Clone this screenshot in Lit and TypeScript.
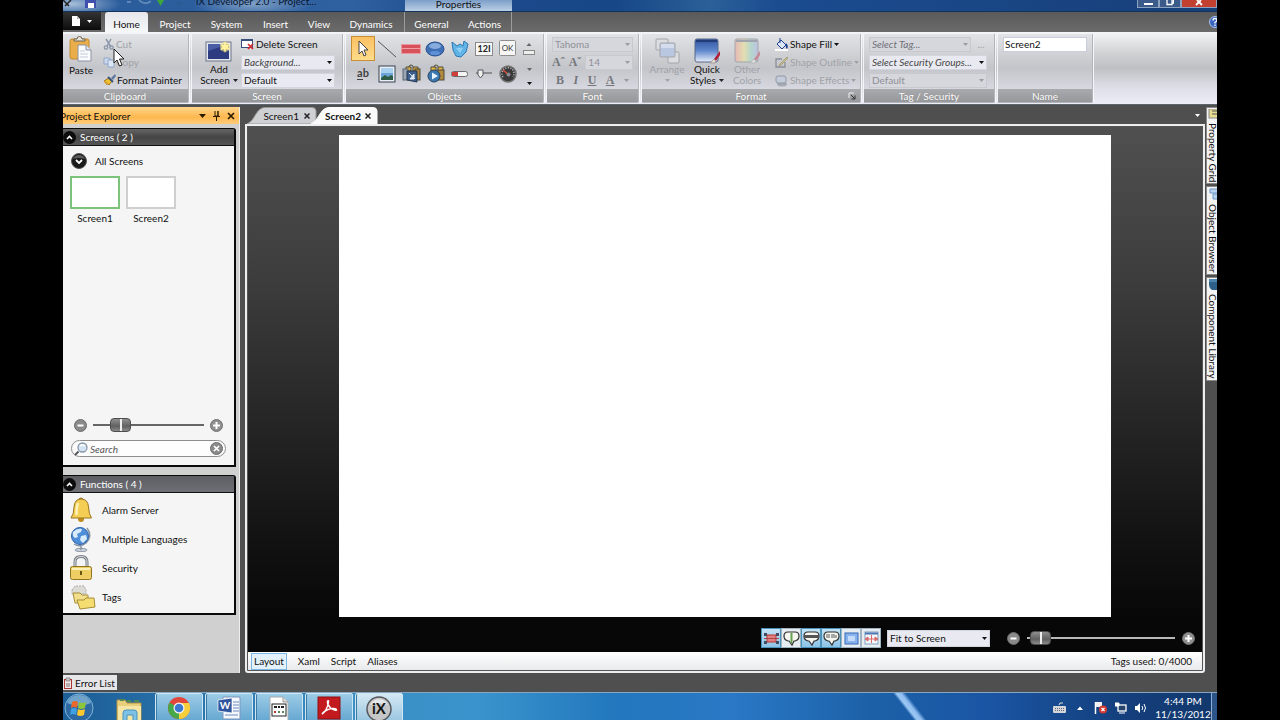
import { LitElement, html, css, svg, nothing, TemplateResult } from "lit";
import { customElement, property } from "lit/decorators.js";
import { classMap } from "lit/directives/class-map.js";

const icon = (w: number, h: number, body: unknown, box = `0 0 ${w} ${h}`) =>
  html`<svg width=${w} height=${h} viewBox=${box} aria-hidden="true">${body}</svg>`;

const caret = (color = "#111") => icon(5, 3, svg`<path d="M0 0h5L2.5 3z" fill=${color}/>`);

const base = css`
  * { box-sizing: border-box; }
  :host { font-family: Lato, Roboto, "Noto Sans", sans-serif; font-size: 10px; line-height: 12px; color: #111; }
  button, input, select { font: inherit; color: inherit; margin: 0; padding: 0; border: 0; background: none; border-radius: 0; outline: 0; }
  button { display: flex; align-items: center; justify-content: center; white-space: nowrap; }
  select { appearance: none; }
  svg { display: block; flex: none; }
`;

const art = {
  paste: icon(24, 26, svg`
    <rect x="1" y="3" width="19" height="20" rx="2" fill="#e9ae4a" stroke="#c48a2c"/>
    <path d="M5 5V3h3q0-2.500 2.500-2.500T13 3h3v2z" fill="#e8e4da" stroke="#6d6250"/>
    <path d="M9 9h8l5 5v11H9z" fill="#fafbfd" stroke="#8a93a6"/>
    <path d="M17 9v5h5" fill="#dfe4ee" stroke="#8a93a6"/>
    <path d="M11 15h5M11 18h8M11 21h8" stroke="#c5cbd8"/>`),
  cut: icon(12, 12, svg`<path d="M3 1l5 8M8 1L4 8" stroke="#8b97aa" stroke-width="1.500"/><circle cx="3" cy="9.500" r="1.700" fill="none" stroke="#8b97aa" stroke-width="1.300"/><circle cx="8.500" cy="9.500" r="1.700" fill="none" stroke="#8b97aa" stroke-width="1.300"/>`),
  copy: icon(12, 12, svg`<path d="M1 2h5l1 1v5H1z" fill="#cddaee" stroke="#8fa6c8"/><path d="M5 4h5l1 1v6H5z" fill="#dce6f4" stroke="#8fa6c8"/>`),
  painter: icon(13, 12, svg`<path d="M1 7l5-3 3 3-3 4z" fill="#f2c230" stroke="#a5791a"/><path d="M5 3l5 5" stroke="#3c5478" stroke-width="2"/><path d="M8 4l4-4 1 2-3 4z" fill="#5f7b9f"/><path d="M1 7l3 4" stroke="#d99a12"/>`),
  addScreen: icon(28, 24, svg`
    <rect x="1" y="3" width="25" height="19" fill="#e4e7ee" stroke="#6c748a"/>
    <rect x="3" y="5" width="21" height="15" fill="#4a5da4"/><path d="M3 20V12L24 5v15z" fill="#2d3c80"/>
    <circle cx="20" cy="8" r="5" fill="#fbe77a" opacity=".6"/>
    <path d="M20 2l1.200 3.800L25 5l-2 3 2 3-3.800-.8L20 14l-1.200-3.800L15 11l2-3-2-3 3.800.8z" fill="#fff3a0"/>`),
  deleteScreen: icon(13, 12, svg`<rect x=".5" y="1.500" width="11" height="8" fill="#fff" stroke="#39507c"/><path d="M0 1h12v2H0z" fill="#39507c"/><path d="M7 6l5 5M12 6l-5 5" stroke="#d3252b" stroke-width="1.700"/>`),
  pointer: icon(12, 18, svg`<path d="M2 1v13l3-3 2 5 2-1-2-5h4z" fill="#fff" stroke="#444" stroke-width="1"/>`),
  line: icon(20, 18, svg`<path d="M1 1l18 16" stroke="#555"/>`),
  rect: icon(20, 12, svg`<rect x=".5" y="1.500" width="19" height="9" fill="#d8525c" stroke="#e99aa0"/><path d="M1 5.500h18" stroke="#eea0a5" stroke-width="1"/>`),
  ellipse: icon(20, 16, svg`<ellipse cx="10" cy="8" rx="9" ry="7" fill="#3f6fb4" stroke="#264f8e"/><ellipse cx="10" cy="5" rx="6" ry="3" fill="#86abdc"/><ellipse cx="10" cy="12" rx="5" ry="2" fill="#5d92d6"/>`),
  poly: icon(18, 18, svg`<path d="M1 2l5 4 3-2 3 2 1-5 4 3-2 8-5 5-5-1-3-6z" fill="#62b4e6" stroke="#2c78b4"/><path d="M5 8h7l-3 5z" fill="#8fd0f4"/>`),
  num: icon(18, 14, svg`<rect x=".5" y=".5" width="17" height="13" fill="#f7f7f7" stroke="#8a8a8a"/><text x="9" y="10" text-anchor="middle" font-size="9" font-weight="700" fill="#222">12I</text>`),
  ok: icon(18, 17, svg`<rect x=".5" y=".5" width="16" height="15" rx="1" fill="#f6f6f6" stroke="#8e8e8e"/><text x="8.500" y="11" text-anchor="middle" font-size="8" fill="#333">OK</text>`),
  ab: icon(16, 14, svg`<text x="8" y="10" text-anchor="middle" font-size="11" font-weight="700" fill="#444">ab</text><path d="M2 12.500h6" stroke="#444"/>`),
  picture: icon(18, 18, svg`<rect x="1" y="1" width="16" height="16" fill="#e8eef4" stroke="#39434f"/><rect x="3" y="3" width="12" height="12" fill="#6ba5d8"/><path d="M3 3h12v5H3z" fill="#a9d0ee"/><path d="M3 13l4-3 3 2 3-2 2 1v4H3z" fill="#2f5c47"/>`),
  clips: icon(19, 19, svg`<path d="M4 3h5v4H4zM11 3h5v4h-5z" fill="#e8b53e" stroke="#4a4a3a"/><path d="M7 3q0-2 2-2t2 2" fill="none" stroke="#4a4a3a"/><rect x="1" y="5" width="5" height="11" fill="#9aa5b5" stroke="#5b6675"/><rect x="13" y="5" width="5" height="11" fill="#b5893d" stroke="#4a4a3a"/><path d="M5 7h10v11l-10-2z" fill="#3c5f8f" stroke="#26384f"/><path d="M7 9l6 6M12 10v5H8z" fill="#dfe9f5" stroke="#dfe9f5"/>`),
  media: icon(19, 19, svg`<path d="M5 3h5v4H5zM12 3h5v4h-5z" fill="#e8b53e" stroke="#4a4a3a"/><path d="M8 3q0-2 2-2t2 2" fill="none" stroke="#4a4a3a"/><rect x="12" y="6" width="6" height="10" fill="#b5893d" stroke="#4a4a3a"/><circle cx="8" cy="12" r="6" fill="#3b78b0" stroke="#28435e"/><path d="M6 8.500l6 3.500-6 3.500z" fill="#e9f3fb"/>`),
  meter: icon(17, 8, svg`<rect x=".5" y="1.500" width="16" height="5" rx="2" fill="#f4f4f4" stroke="#6a6a6a"/><path d="M1 2h6v4H1z" fill="#cf3c3c"/>`),
  slider: icon(17, 10, svg`<path d="M1 4h16" stroke="#777" stroke-width="1.500"/><path d="M3 1h5v5L5.500 9 3 6z" fill="#eef3ea" stroke="#556"/>`),
  gauge: icon(18, 18, svg`<circle cx="9" cy="9" r="8" fill="#3a3a3c" stroke="#777" stroke-width="1.500"/><path d="M4 12a6 6 0 1 1 10 0" fill="none" stroke="#c9c9c9" stroke-dasharray="1 1.500" stroke-width="1.500"/><path d="M4 5l6 5" stroke="#e24e3c" stroke-width="1.500"/><circle cx="9.500" cy="9.500" r="2" fill="#8a8a8a"/>`),
  arrange: icon(27, 26, svg`<g stroke="#a3a5aa" fill="#dcdde0"><rect x="2" y="1" width="12" height="11" rx="1"/><rect x="14" y="14" width="11" height="11" rx="1"/><rect x="6" y="5" width="15" height="14" rx="1" fill="#b9c7e0"/></g><path d="M7 6h13v4H7z" fill="#d5dced"/>`),
  quick: icon(27, 26, svg`<defs><linearGradient id="q" x2="0" y2="1"><stop offset="0" stop-color="#2f539e"/><stop offset=".5" stop-color="#5d86cc"/><stop offset="1" stop-color="#e8effa"/></linearGradient></defs><rect x="1" y="1" width="23" height="23" rx="2" fill="url(#q)" stroke="#5a6887"/><path d="M2 3h21" stroke="#223c78" stroke-width="2"/><path d="M26 13l-6 8 2 2 4-6z" fill="#b01f37"/><path d="M20 21l-4 4h5l1-2z" fill="#e6d9d2" stroke="#8d7d75" stroke-width=".6"/>`),
  others: icon(27, 26, svg`<defs><linearGradient id="o"><stop offset="0" stop-color="#e6b9b4"/><stop offset=".4" stop-color="#e3ddb2"/><stop offset=".7" stop-color="#b4d6cd"/><stop offset="1" stop-color="#bfc3e2"/></linearGradient></defs><rect x="1" y="1" width="23" height="23" rx="2" fill="url(#o)" stroke="#a2a5ab"/><path d="M2 3h21" stroke="#a0a4ae" stroke-width="2"/><path d="M26 13l-6 8 2 2 4-6z" fill="#c48b95"/><path d="M20 21l-4 4h5l1-2z" fill="#ddd" stroke="#aaa" stroke-width=".6"/>`),
  fill: icon(13, 13, svg`<path d="M2 6l4-4 5 5-4 4z" fill="#dce8fa" stroke="#1d3f8e"/><path d="M5 0v5" stroke="#1d3f8e"/><path d="M11 5q3 3 1 6-2-2-1-6z" fill="#1d3f8e"/><path d="M0 12h13" stroke="#fff" stroke-width="2"/>`),
  outline: icon(13, 13, svg`<path d="M10 6v5H1V3h6" fill="none" stroke="#8a8f98" stroke-width="1.300"/><path d="M12 1L5 8l-1 2 2-1 7-7z" fill="#d0c384" stroke="#8c8763" stroke-width=".6"/>`),
  effects: icon(13, 13, svg`<ellipse cx="7" cy="10" rx="5" ry="2.500" fill="#a4a9b2"/><rect x="1" y="2" width="10" height="7" rx="2" fill="#c4ccda" stroke="#8f98a8"/>`),
  minus: icon(13, 13, svg`<circle cx="6.500" cy="6.500" r="6" fill="#8a8a8a" stroke="#6c6c6c"/><path d="M3.500 6.500h6" stroke="#fff" stroke-width="2"/>`),
  plus: icon(13, 13, svg`<circle cx="6.500" cy="6.500" r="6" fill="#8f8f8f" stroke="#707070"/><path d="M3 6.500h7M6.500 3v7" stroke="#fff" stroke-width="2"/>`),
  clear: icon(13, 13, svg`<circle cx="6.500" cy="6.500" r="6" fill="#8a8a8a" stroke="#6e6e6e"/><path d="M4 4l5 5M9 4L4 9" stroke="#fff" stroke-width="1.700"/>`),
  glass: icon(14, 14, svg`<path d="M4.500 9.500L1 13" stroke="#555" stroke-width="2"/><circle cx="8.500" cy="5.500" r="4.500" fill="#d3e4f2" stroke="#8797a8" stroke-width="1.300"/><path d="M6 4q2-2 5 0" stroke="#fff" fill="none" stroke-width="1.500"/>`),
  up: icon(13, 13, svg`<circle cx="6.500" cy="6.500" r="6.500" fill="#0c0c0c"/><path d="M4 8l2.500-2.500L9 8" fill="none" stroke="#fff" stroke-width="1.600"/>`),
  down: icon(16, 16, svg`<circle cx="8" cy="8" r="7.500" fill="#1a1a1a" stroke="#555"/><path d="M2 6a6.500 6.500 0 0 1 12 0q-6-2-12 0z" fill="#5a5a5a"/><path d="M5 7l3 3 3-3" fill="none" stroke="#fff" stroke-width="1.800"/>`),
  bell: icon(24, 26, svg`<circle cx="11" cy="22" r="3" fill="#c08b1c"/><circle cx="11" cy="3" r="2" fill="#f5d873" stroke="#8d6a1b"/><path d="M11 2q7 0 7.500 8 .3 7 3 11H1q3-4 3-11Q4.500 2 11 2z" fill="#f4cd55" stroke="#9a751f"/><path d="M8 6Q6.500 9 6.500 18" stroke="#fff2b8" stroke-width="2.500" fill="none"/>`),
  globe: icon(24, 26, svg`<ellipse cx="11" cy="24" rx="6" ry="1.700" fill="#c9d0d8" stroke="#8b96a5"/><path d="M11 20v4M17 2q6 8-1 15-6 5-12 1" fill="none" stroke="#8b96a5" stroke-width="1.500"/><circle cx="10" cy="10" r="8.500" fill="#4f8ed8" stroke="#2c62ab"/><path d="M3 6q4-4 9-3l-1 3-4 2 1 3-3 1q-3-2-2-6zM11 10l5-1 1 4-4 4-3-3z" fill="#d8ebfb"/>`),
  lock: icon(24, 26, svg`<path d="M5 12V7q0-5.500 6-5.500T17 7v5" fill="none" stroke="#7b8187" stroke-width="3"/><path d="M5 12V7q0-5.500 6-5.500T17 7v5" fill="none" stroke="#d7dbdf"/><rect x=".5" y="11.500" width="21" height="13" rx="2" fill="#efcf63" stroke="#8f7421"/><path d="M2 14h18" stroke="#fbf0b5" stroke-width="2"/><path d="M11 16v4" stroke="#6a5515" stroke-width="2"/>`),
  tags: icon(26, 26, svg`<path d="M2 6l3-4h9l2 4v4H2z" fill="#dcdcd4" stroke="#aaa" stroke-dasharray="2 1"/><path d="M3 9h7l2 2h6v8H5z" fill="#f2df8c" stroke="#a88d35"/><path d="M7 16h7l2-2h8l1 9-15 2z" fill="#f6dd72" stroke="#a88d35"/>`),
  error: icon(9, 12, svg`<rect x=".5" y="2.500" width="7" height="9" fill="#f5e6e6" stroke="#a33"/><path d="M2 1h4v3H2z" fill="#c8c8c8" stroke="#666" stroke-width=".6"/><path d="M3 6v4M5 6v4" stroke="#777"/>`),
};

@customElement("ix-combo")
class IxCombo extends LitElement {
  @property() label = "";
  @property() value = "";
  @property({ type: Boolean, reflect: true }) disabled = false;
  @property({ type: Boolean, reflect: true }) hint = false;
  static styles = [base, css`
    :host { display: grid; align-items: center; height: 15px; background: #e9eaf1; border: 1px solid #d3d5de; min-width: 0; }
    select { grid-area: 1 / 1; width: 100%; height: 100%; padding-left: 2px; line-height: 12px; opacity: 1; }
    svg { grid-area: 1 / 1; justify-self: end; margin-right: 2px; pointer-events: none; }
    :host([hint]) select { font-style: italic; color: #444; }
    :host([disabled]) { background: #d6d7dc; border-color: #c8c9cf; }
    :host([disabled]) select { color: #8e9098; }
    :host([disabled][hint]) select { color: #6e7078; }
  `];
  render() {
    return html`<select aria-label=${this.label} ?disabled=${this.disabled}><option>${this.value}</option></select>${caret(this.disabled ? "#9a9ca3" : "#111")}`;
  }
}

@customElement("ix-group")
class IxGroup extends LitElement {
  @property() name = "";
  @property({ type: Boolean }) launcher = false;
  static styles = [base, css`
    :host { display: grid; grid-template-rows: 1fr 13px; height: 70px; border: 1px solid #b3b5ba; border-left-color: #f3f4f7; border-top-color: #f3f4f7;
      background: linear-gradient(#e2e3e6, #cbccd0 38%, #c4c5ca 50%, #dadbe3 85%); border-radius: 2px; box-shadow: 1px 0 #f5f6fa; }
    .body { display: flex; padding: 1px 5px 0; min-width: 0; }
    .name { display: flex; align-items: center; justify-content: center; color: #fff; background: linear-gradient(#a9aaad, #97989b); text-shadow: 0 0 1px #777; }
    .launch { position: absolute; right: 4px; }
    .foot { display: grid; position: relative; align-items: center; }
    .foot .name { height: 13px; }
  `];
  render() {
    return html`<div class="body"><slot></slot></div>
      <div class="foot"><div class="name">${this.name}</div>
      ${this.launcher ? html`<button class="launch" aria-label="More ${this.name}">${icon(8, 8, svg`<path d="M1 6V1h5" fill="none" stroke="#eee"/><path d="M3 3l4 4M7 3.500V7H3.500" fill="none" stroke="#333"/>`)}</button>` : nothing}</div>`;
  }
}

@customElement("ix-ribbon")
class IxRibbon extends LitElement {
  static styles = [base, css`
    :host { display: flex; gap: 2px; height: 73px; padding: 1px 0 2px; border-bottom: 1px solid #5c6470; background: linear-gradient(#f4f5f6, #d0d1d3 30%, #bfc0c3 50%, #d9dae2 72%, #eceef8); }
    .clip { width: 128px; margin-left: -2px; }
    .screen { width: 152px; } .objects { width: 199px; } .font { width: 93px; }
    .format { width: 220px; } .tag { width: 132px; } .nm { width: 96px; }
    .big { flex-direction: column; justify-content: flex-start; gap: 0; line-height: 11px; padding-top: 2px; width: 39px; }
    .format .big { width: 40px; }
    .big .pic { display: flex; align-items: center; height: 27px; }
    .paste .pic { height: 29px; align-items: flex-start; }
    .big .cap { display: flex; align-items: center; gap: 3px; min-height: 11px; }
    .paste { width: 28px; padding-top: 1px; }
    .add { width: 44px; }
    .list { display: grid; grid-auto-rows: 18px; align-items: center; flex: 1; min-width: 0; }
    .list.left { padding-left: 8px; }
    .list.trim { padding-right: 2px; }
    .row { justify-content: flex-start; gap: 2px; }
    .clip .row { gap: 1px; }
    .off { color: #a0a2a8; }
    .tools { flex: 1; display: grid; grid-template-columns: repeat(7, 1fr); grid-auto-rows: 25px; padding-top: 1px; }
    .tool.on { background: linear-gradient(#fbc063, #ffdc8a); border: 1px solid #c98f36; }
    .scroll { width: 18px; display: flex; flex-direction: column; align-items: center; justify-content: space-between; padding: 8px 0 4px; }
    .line { display: flex; align-items: center; gap: 4px; }
    .line ix-combo { flex: 1; }
    .pad { justify-content: space-between; padding: 0 4px; }
    .serif { font-family: "Liberation Serif", serif; font-size: 12px; font-weight: 700; color: #74767c; }
    .it { font-style: italic; } .un { text-decoration: underline; }
    .dots { width: 12px; }
    .name-in { width: 100%; height: 15px; background: #fff; border: 1px solid #c9ccda; padding-left: 1px; }
  `];

  big(pic: TemplateResult, lines: string[], cls: string, drop = false) {
    return html`<button class="big ${cls}"><span class="pic">${pic}</span>${lines.map((t, i) => html`<span class="cap">${t}${drop && i === lines.length - 1 ? caret(cls === "off" ? "#a0a2a8" : "#222") : nothing}</span>`)}</button>`;
  }

  render() {
    const a = art;
    const tools: [string, TemplateResult][] = [
      ["Select", a.pointer], ["Line", a.line], ["Rectangle", a.rect], ["Ellipse", a.ellipse], ["Polyline", a.poly], ["Analog Numeric", a.num], ["Button", a.ok],
      ["Text", a.ab], ["Picture", a.picture], ["Multi Picture", a.clips], ["Media Player", a.media], ["Linear Meter", a.meter], ["Slider", a.slider], ["Circular Meter", a.gauge],
    ];
    return html`
      <ix-group class="clip" name="Clipboard">
        ${this.big(a.paste, ["Paste"], "paste")}
        <div class="list left">
          <button class="row off">${a.cut}Cut</button>
          <button class="row off">${a.copy}Copy</button>
          <button class="row">${a.painter}Format Painter</button>
        </div>
      </ix-group>
      <ix-group class="screen" name="Screen">
        ${this.big(a.addScreen, ["Add", "Screen"], "add", true)}
        <div class="list trim">
          <button class="row">${a.deleteScreen}Delete Screen</button>
          <ix-combo hint label="Background screen" value="Background..."></ix-combo>
          <ix-combo label="Screen style" value="Default"></ix-combo>
        </div>
      </ix-group>
      <ix-group class="objects" name="Objects">
        <div class="tools">${tools.map(([n, pic], i) => html`<button class=${classMap({ tool: true, on: i === 0 })} aria-label=${n}>${pic}</button>`)}</div>
        <div class="scroll">
          ${icon(12, 13, svg`<path d="M3.500 3L6 0l2.500 3z" fill="#666"/><rect x=".5" y="7.500" width="11" height="4" fill="#eee" stroke="#888"/>`)}
          ${caret("#666")}${caret()}
        </div>
      </ix-group>
      <ix-group class="font" name="Font">
        <div class="list">
          <ix-combo disabled label="Font family" value="Tahoma"></ix-combo>
          <div class="line"><button class="serif">A&#710;</button><button class="serif">A&#711;</button><ix-combo disabled label="Font size" value="14"></ix-combo></div>
          <div class="line pad"><button class="serif">B</button><button class="serif it">I</button><button class="serif un">U</button><button class="serif un">A</button>${caret("#999")}</div>
        </div>
      </ix-group>
      <ix-group class="format" name="Format" launcher>
        ${this.big(a.arrange, ["Arrange", ""], "off", true)}
        ${this.big(a.quick, ["Quick", "Styles"], "on", true)}
        ${this.big(a.others, ["Other", "Colors"], "off")}
        <div class="list left">
          <button class="row">${a.fill}Shape Fill ${caret()}</button>
          <button class="row off">${a.outline}Shape Outline ${caret("#a0a2a8")}</button>
          <button class="row off">${a.effects}Shape Effects ${caret("#a0a2a8")}</button>
        </div>
      </ix-group>
      <ix-group class="tag" name="Tag / Security">
        <div class="list trim">
          <div class="line"><ix-combo disabled hint label="Tag" value="Select Tag..."></ix-combo><button class="dots off">...</button></div>
          <ix-combo hint label="Security groups" value="Select Security Groups..."></ix-combo>
          <ix-combo disabled label="Visibility" value="Default"></ix-combo>
        </div>
      </ix-group>
      <ix-group class="nm" name="Name">
        <div class="list"><input class="name-in" aria-label="Name" .value=${"Screen2"}></div>
      </ix-group>`;
  }
}

const zoomStyles = css`
  .zoom { display: flex; align-items: center; gap: 7px; }
  .zoom input { appearance: none; flex: 1; min-width: 0; height: 16px; background: linear-gradient(var(--track), var(--track)) center / 100% 2px no-repeat; }
  .zoom input::-webkit-slider-thumb { appearance: none; width: 21px; height: 14px; border: 1px solid #4d4d4d; border-radius: 4px;
    background: linear-gradient(90deg, transparent 9px, #eee 9px, #eee 11px, transparent 11px), linear-gradient(#8f8f8f, #606060 60%, #8b8b8b); }
`;

@customElement("ix-explorer")
class IxExplorer extends LitElement {
  static styles = [base, zoomStyles, css`
    :host { display: flex; flex-direction: column; background: #d0d0d0; border-right: 1px solid #eee; overflow: hidden; }
    .title { display: flex; align-items: center; gap: 7px; height: 17px; padding-right: 4px; background: linear-gradient(#ffd58c, #fdb74e 60%, #ffcd7c); }
    .title h2 { flex: 1; margin: 0 0 0 -3px; font-size: 10px; font-weight: 400; }
    .panel { display: flex; flex-direction: column; margin: 4px 3px 4px 0; border: solid #0a0a0a; border-width: 1px 2px 2px 0; background: #f5f5f5; border-radius: 0 3px 0 0; }
    .screens { height: 339px; }
    .head { height: 17px; justify-content: flex-start; gap: 4px; color: #fff; background: linear-gradient(#666, #444 50%, #565656); border-bottom: 1px solid #111; width: 100%; }
    .head.dim { background: linear-gradient(#5c5c62, #6f6f76); }
    .all { justify-content: flex-start; gap: 8px; padding: 7px 0 7px 8px; }
    .thumbs { display: flex; gap: 6px; padding-left: 7px; flex: 1; align-items: flex-start; }
    .thumb { flex-direction: column; gap: 3px; width: 50px; }
    .thumb i { width: 50px; height: 33px; background: #fff; border: 2px solid #cfcfcf; }
    .thumb.on i { border-color: #7cc47c; }
    .zoom { --track: #666; padding: 0 11px; height: 18px; gap: 6px; }
    .search { display: flex; align-items: center; gap: 2px; height: 17px; margin: 6px 8px 8px 8px; border: 1px solid #8d8d8d; border-radius: 9px; background: #fdfdfd; padding: 0 2px; }
    .search input { flex: 1; min-width: 0; font-style: italic; }
    .search input::placeholder { color: #555; opacity: 1; }
    .items { display: grid; grid-auto-rows: 29px; padding: 2px 0 2px 7px; }
    .item { justify-content: flex-start; gap: 8px; }
    .item span { width: 24px; }
  `];
  render() {
    const items: [TemplateResult, string][] = [[art.bell, "Alarm Server"], [art.globe, "Multiple Languages"], [art.lock, "Security"], [art.tags, "Tags"]];
    return html`
      <div class="title"><h2>Project Explorer</h2>
        <button aria-label="Window position">${icon(7, 4, svg`<path d="M0 0h7L3.500 4z" fill="#2b1c00"/>`)}</button>
        <button aria-label="Auto hide">${icon(7, 10, svg`<path d="M2 0v5h3V0M0 5.500h7M3.500 5v5M5 0v5" fill="none" stroke="#2b1c00"/>`)}</button>
        <button aria-label="Close">${icon(8, 8, svg`<path d="M1 1l6 6M7 1L1 7" stroke="#2b1c00" stroke-width="1.700"/>`)}</button>
      </div>
      <section class="panel screens">
        <button class="head">${art.up}Screens ( 2 )</button>
        <button class="all">${art.down}All Screens</button>
        <div class="thumbs">
          <button class="thumb on"><i></i>Screen1</button>
          <button class="thumb"><i></i>Screen2</button>
        </div>
        <div class="zoom"><button aria-label="Smaller">${art.minus}</button><input type="range" aria-label="Thumbnail size" .value=${"19"}><button aria-label="Larger">${art.plus}</button></div>
        <label class="search">${art.glass}<input placeholder="Search" aria-label="Search"><button aria-label="Clear">${art.clear}</button></label>
      </section>
      <section class="panel">
        <button class="head dim">${art.up}Functions ( 4 )</button>
        <div class="items">${items.map(([p, t]) => html`<button class="item"><span>${p}</span>${t}</button>`)}</div>
      </section>`;
  }
}

@customElement("ix-editor")
class IxEditor extends LitElement {
  static styles = [base, zoomStyles, css`
    :host { display: flex; flex-direction: column; min-width: 0; }
    .tabs { display: flex; align-items: stretch; height: 17px; padding: 0 5px 0 2px; }
    .doc { display: grid; width: 70px; margin-right: -6px; }
    .doc svg, .doc span { grid-area: 1 / 1; }
    .doc span { display: flex; align-items: center; justify-content: flex-end; gap: 5px; padding-right: 7px; }
    .doc.on { width: 67px; font-weight: 700; z-index: 1; }
    .doc.on span { gap: 4px; }
    .more { margin-left: auto; }
    .frame { flex: 1; display: flex; flex-direction: column; border: 2px solid #eceef0; border-radius: 0 0 3px 3px; box-shadow: inset 0 0 0 1px #555; padding: 1px; min-height: 0; }
    .canvas { flex: 1; display: flex; flex-direction: column; min-height: 0; padding-top: 8px; background: linear-gradient(#505050, #3c3c3c 30%, #111 80%, #070707 94%); }
    .stage { flex: 1; min-height: 0; display: flex; justify-content: center; }
    .page { height: 100%; aspect-ratio: 8 / 5; background: #fff; }
    .bar { display: flex; align-items: center; justify-content: flex-end; height: 35px; padding: 7px 7px 0 0; flex: none; }
    .opts { display: flex; margin-right: 6px; }
    .opt { width: 20px; height: 20px; background: #e6ecf0; border: 1px solid #9fb4c0; }
    .opt.on { background: linear-gradient(#c3e2f5, #8cc3e6); border-color: #4b93bb; }
    .bar ix-combo { width: 103px; height: 17px; margin-right: 17px; }
    .zoom { --track: #b8b8b8; width: 188px; }
    .views { display: flex; align-items: center; height: 18px; flex: none; padding: 0 10px 0 3px; gap: 11px; background: linear-gradient(#fff, #e9eaec); }
    .view.on { background: #e2f1fc; border: 1px solid #7db7e4; height: 17px; padding: 0 2px; }
    .used { margin-left: auto; }
  `];
  render() {
    const shape = (on: boolean, w: number) => icon(w, 17, svg`<path d=${`M0 17Q5 15 9 7 13 0 19 .5H${w - 5}Q${w - 1} .5 ${w - 1} 4V17z`} fill=${on ? "#fafafa" : "#cfd0d3"} stroke=${on ? "#fff" : "#9a9a9a"}/>`);
    const x = icon(6, 6, svg`<path d="M.5 .5l5 5M5.500 .5l-5 5" stroke="#222" stroke-width="1.500"/>`);
    const balloon = (inner: unknown) => icon(17, 17, svg`<path d="M5 2h7q4 0 4 4t-4 5h-1l-2 4-3-4H5Q1 10 1 6t4-4z" fill="#f6f6f0" stroke="#333" stroke-width="1.200"/>${inner}`);
    const opts: [string, boolean, TemplateResult][] = [
      ["Snap", true, icon(17, 17, svg`<rect x="4" y="5" width="9" height="7" fill="#e08080" stroke="#b33"/><path d="M1 3h3v3H1zM13 3h3v3h-3zM1 11h3v3H1zM13 11h3v3h-3z" fill="#444a60"/><path d="M1 8.500h15" stroke="#a44"/>`)],
      ["Tags", false, balloon(svg`<path d="M8.500 3v10" stroke="#62a24e" stroke-width="2"/>`)],
      ["Actions", true, balloon(svg`<path d="M1 5h15v3H1z" fill="#555"/>`)],
      ["Names", true, balloon(svg`<path d="M4 4v4M6 4v4M9 4v4M11 4v4M13 5v3" stroke="#333" stroke-width=".8"/>`)],
      ["Area", false, icon(17, 17, svg`<rect x="2" y="3" width="13" height="11" fill="#86b2ee" stroke="#3568b8"/><rect x="5" y="6" width="7" height="5" fill="#c4dbfa"/>`)],
      ["Center", false, icon(17, 17, svg`<rect x="2" y="2" width="13" height="12" fill="#f4f8fc" stroke="#7d9cc0"/><path d="M2 3.500h13" stroke="#4c78b4" stroke-width="2"/><path d="M8.500 5v8M4 9h9M2 9l3-2v4zM15 9l-3-2v4z" stroke="#d86a6a" fill="#d86a6a"/>`)],
    ];
    return html`
      <div class="tabs">
        <button class="doc">${shape(false, 70)}<span>Screen1 ${x}</span></button>
        <button class="doc on">${shape(true, 67)}<span>Screen2 ${x}</span></button>
        <button class="more" aria-label="Open documents">${caret("#fff")}</button>
      </div>
      <div class="frame">
        <div class="canvas">
          <div class="stage"><div class="page"></div></div>
          <div class="bar">
            <div class="opts">${opts.map(([n, on, p]) => html`<button class=${classMap({ opt: true, on })} aria-label=${n}>${p}</button>`)}</div>
            <ix-combo label="Zoom" value="Fit to Screen"></ix-combo>
            <div class="zoom"><button aria-label="Zoom out">${art.minus}</button><input type="range" aria-label="Zoom level" .value=${"2"}><button aria-label="Zoom in">${art.plus}</button></div>
          </div>
        </div>
        <div class="views">
          <button class="view on">Layout</button><button class="view">Xaml</button><button class="view">Script</button><button class="view">Aliases</button>
          <span class="used">Tags used: 0/4000</span>
        </div>
      </div>`;
  }
}

@customElement("ix-taskbar")
class IxTaskbar extends LitElement {
  static styles = [base, css`
    :host { display: flex; height: 28px; overflow: hidden; color: #fff; border-top: 1px solid #86a6c2;
      background: linear-gradient(52deg, transparent 72.400%, #9cc8f4 72.700%, #8dbcf0 73.100%, transparent 73.500%) , linear-gradient(90deg, #1c5d96, #3a8fc4 25%, #3a93cc 36%, #2277bd 48%, #2a78c6 58%, #1c61a8 70%, #1a55a4 80%, #143f7c 92%, #12386c); }
    .start { width: 32px; align-items: flex-start; }
    .app { width: 48px; margin-right: 2px; align-items: flex-start; padding-top: 3px; height: 32px; }
    .pin { margin-left: 10px; }
    .open { border: 1px solid #cfe6f5; border-radius: 2px; background: linear-gradient(#9ccbe6, #5fa3cf); box-shadow: inset 1px 0 #3b7ba6; padding-top: 2px; }
    .open.on { background: linear-gradient(#d4e9f4, #93c2de); }
    .tray { margin-left: auto; display: flex; align-items: center; gap: 8px; padding-top: 2px; }
    .clock { text-align: center; line-height: 13px; width: 56px; }
    .desk { width: 6px; border-left: 1px solid #8fb0d4; background: #2c5488; height: 28px; }
  `];
  render() {
    const apps: [string, TemplateResult, string][] = [
      ["Explorer", icon(28, 26, svg`<path d="M2 4h8l2 3h14v18H2z" fill="#e9cf7c" stroke="#b39343"/><path d="M3 10h23v15H3z" fill="#f6e6a6"/><path d="M5 4h4M12 5h4M19 5h5" stroke="#4c8a50" stroke-width="2"/><path d="M8 26V17q0-3 3-3h8q3 0 3 3v9h-4v-7h-6v7z" fill="#7dc1e6" stroke="#4a92bd"/>`), "pin"],
      ["Chrome", icon(24, 24, svg`<circle cx="12" cy="12" r="11" fill="#e2463a"/><path d="M12 12L2.500 6.500A11 11 0 0 0 12 23l5-8.500z" fill="#45a849"/><path d="M12 12l0-5h10A11 11 0 0 1 12 23z" fill="#f6cf3b"/><circle cx="12" cy="12" r="5.500" fill="#f4f4f4"/><circle cx="12" cy="12" r="4.300" fill="#3c78d0"/>`), "open"],
      ["Word", icon(24, 24, svg`<path d="M6 1h17v22H6z" fill="#f4f7fc" stroke="#7d95bd"/><path d="M16 6h6M16 9h6M16 12h6M16 15h6M8 19h13" stroke="#6f8cc0"/><path d="M1 4l14-2v15L1 15z" fill="#2f559e" stroke="#fff" stroke-width=".7"/><text x="8" y="13" text-anchor="middle" font-size="10" font-weight="700" fill="#fff">W</text>`), "open"],
      ["Document", icon(22, 25, svg`<path d="M2 1h13l5 5v20H2z" fill="#fff" stroke="#aaa"/><path d="M15 1v5h5" fill="#ddd" stroke="#999"/><rect x="4" y="8" width="14" height="12" fill="#fff" stroke="#222"/><path d="M6 11h3M10 11h2M13 11h3" stroke="#222" stroke-width="2"/><path d="M6 16h2" stroke="#c33" stroke-width="2"/><path d="M10 16h2M14 16h2" stroke="#585" stroke-width="2"/>`), "open"],
      ["Reader", icon(24, 24, svg`<rect x="1" y="1" width="22" height="22" fill="#c31a1f" stroke="#8c1013"/><path d="M5 18q5-3 6.500-12 .5-2-1-1-.5 3 3 7 4 3 6 2 0-2-5-1.500Q8 14 5 18z" fill="none" stroke="#fff" stroke-width="1.500"/>`), "open"],
      ["iX", icon(26, 26, svg`<circle cx="13" cy="13" r="12" fill="#c4c6c8" stroke="#55585c" stroke-width="1.500"/><path d="M4 9a10 10 0 0 1 18 0q-9-3-18 0z" fill="#e6e7e8"/><text x="13" y="18" text-anchor="middle" font-size="15" font-weight="700" fill="#141414">iX</text>`), "open on"],
    ];
    return html`
      <button class="start" aria-label="Start">${icon(30, 30, svg`<circle cx="15" cy="15" r="14" fill="#2d6aa4" stroke="#7fb4d8"/><path d="M3 10a13 13 0 0 1 24 0q-12 5-24 0z" fill="#8fbddb" opacity=".7"/><path d="M8 9q3-2 6 0l-1 6q-3-2-6 0z" fill="#e8682c"/><path d="M15 9q3 2 7 0l-1 6q-4 2-7 0z" fill="#8cc63c"/><path d="M7 16q3-2 6 0l-1 6q-3-2-6 0z" fill="#3fa0e4"/><path d="M14 16q3 2 7 0l-1 6q-4 2-7 0z" fill="#fbc92e"/>`)}</button>
      ${apps.map(([n, p, c]) => html`<button class="app ${c}" aria-label=${n}>${p}</button>`)}
      <div class="tray">
        ${icon(13, 12, svg`<path d="M6 3q0-3 4-2" stroke="#ddd" fill="none"/><rect x="0" y="4" width="13" height="7" rx="1" fill="#d4d6da"/><path d="M2 6.500h9M2 8.500h9" stroke="#667" stroke-dasharray="1 1"/>`)}
        ${icon(12, 4, svg`<path d="M3 4l3-3.500L9 4z" fill="#fff"/>`)}
        ${icon(13, 13, svg`<path d="M1.500 1v12" stroke="#fff" stroke-width="1.500"/><path d="M2 1h6v5H2z" fill="#f2f2f2"/><circle cx="9" cy="8.500" r="4" fill="#d23a33"/><path d="M7.500 7l3 3M10.500 7l-3 3" stroke="#fff" stroke-width="1.200"/>`)}
        ${icon(12, 12, svg`<rect x="3" y="3" width="8" height="6" fill="#24446c" stroke="#fff" stroke-width="1.300"/><path d="M0 1h4v3H0zM4 11h6" fill="#fff" stroke="#fff"/>`)}
        ${icon(12, 12, svg`<path d="M0 4h2l3-3v10L2 8H0z" fill="#fff"/><path d="M7 4q1.500 2 0 4M9 2q3 4 0 8" fill="none" stroke="#fff"/>`)}
        <div class="clock">4:44 PM<br>11/13/2012</div>
      </div>
      <button class="desk" aria-label="Show desktop"></button>`;
  }
}

@customElement("app-root")
class AppRoot extends LitElement {
  static styles = [base, css`
    :host { display: block; height: 100vh; background: #000; padding: 0 63px; }
    .window { position: relative; display: flex; flex-direction: column; height: 100%; background: #4f4f4f; overflow: hidden; }
    .title { display: flex; height: 12px; flex: none; overflow: hidden; align-items: flex-start; border-bottom: 1px solid #14335c;
      background: radial-gradient(ellipse 60px 14px at 190px 4px, #7fa0c6, transparent), radial-gradient(ellipse 50px 12px at 8px 4px, #a9c0da, transparent), linear-gradient(90deg, #2a5c9c, #2f609f 25%, #1d4a8c 35%, #174787 48%, #2b6098 56%, #1b4c90 62%, #173f78); }
    .quick { display: flex; gap: 6px; width: 133px; height: 9px; overflow: hidden; }
    .caption { width: 209px; height: 12px; display: flex; align-items: center; margin-top: -5px; color: #0a1730; }
    .context { width: 107px; height: 12px; background: linear-gradient(#7d9fc8, #c0d3e8); display: flex; align-items: center; justify-content: center; padding-bottom: 5px; color: #111; }
    .controls { margin-left: auto; display: flex; height: 8px; }
    .controls button { width: 22px; border: 1px solid #8ea3bf; border-top: 0; background: #3b5c8a; align-items: flex-start; }
    .controls .close { width: 36px; background: #c2402f; }
    .tabs { display: flex; align-items: stretch; height: 20px; flex: none; color: #fff; background: linear-gradient(#5a5a5a, #6b6b6b); }
    .file { width: 38px; gap: 7px; background: linear-gradient(#333, #0c0c0c); margin-bottom: 2px; }
    .tab { padding: 3px 0 0; width: 49px; }
    .home { width: 43px; margin: 0 0 0 4px; color: #111; background: linear-gradient(#e4e6ea, #f6f7f8); border-radius: 3px 3px 0 0; }
    .wide { width: 54px; } .slim { width: 38px; } .extra { width: 66px; }
    .ctx { display: flex; border: solid #9c9c9c; border-width: 0 1px; width: 108px; }
    .ctx .tab { width: 53px; }
    .help { margin-left: auto; width: 8px; overflow: hidden; justify-content: flex-start; }
    .body { flex: 1; display: flex; min-height: 0; padding: 2px 0; }
    ix-explorer { width: 177px; flex: none; margin-right: 5px; }
    ix-editor { flex: 1; }
    .side { width: 12px; overflow: hidden; display: flex; flex-direction: column; gap: 2px; padding-left: 1px; flex: none; }
    .side button { writing-mode: vertical-rl; width: 14px; gap: 4px; padding: 1px 0; background: #f3f3f4; border: 1px solid #888; justify-content: flex-start; }
    .error { display: flex; height: 17px; flex: none; }
    .error button { gap: 2px; background: #e6e6e8; padding: 0 2px 0 1px; height: 15px; }
    .mouse { position: absolute; left: 50px; top: 48px; }
  `];
  render() {
    const tab = (t: string, c = "") => html`<button class="tab ${c}">${t}</button>`;
    return html`<div class="window">
      <header class="title">
        <div class="quick">
          ${icon(12, 9, svg`<path d="M0 0l6 6M8 0L2 6" stroke="#222" stroke-width="1.500"/>`)}
          ${icon(20, 9, svg`<path d="M4 0h11v8H4z" fill="#3e4fae"/><path d="M7 3h6v5H7z" fill="#fff"/>`)}
          ${icon(44, 9, svg`<path d="M20 2h4M32 0q6 6 12 1" stroke="#5d87b6" stroke-width="2" fill="none"/>`)}
          ${icon(12, 9, svg`<path d="M0 0h7L3.500 6z" fill="#3da63b"/>`)}
          ${icon(8, 9, svg`<path d="M1 2h6L4 5z" fill="#2c5b92"/>`)}
        </div>
        <div class="caption">iX Developer 2.0 - Project...</div>
        <div class="context">Properties</div>
        <div class="controls">
          <button aria-label="Minimize">${icon(9, 6, svg`<path d="M0 4h9" stroke="#fff" stroke-width="2"/>`)}</button>
          <button aria-label="Restore">${icon(8, 6, svg`<path d="M1 0v4.500h5V0M6 3h1.500V0" fill="none" stroke="#fff" stroke-width="1.300"/>`)}</button>
          <button class="close" aria-label="Close">${icon(8, 6, svg`<path d="M1 5l5-5M7 5L2 0" stroke="#fff" stroke-width="1.800"/>`)}</button>
        </div>
      </header>
      <nav class="tabs">
        <button class="file" aria-label="File">${icon(8, 10, svg`<path d="M0 0h5l3 3v7H0z" fill="#fff"/><path d="M5 0v3h3" fill="#bbb"/>`)}${caret("#fff")}</button>
        ${tab("Home", "home")}${tab("Project", "wide")}${tab("System")}${tab("Insert")}${tab("View", "slim")}${tab("Dynamics", "extra")}
        <div class="ctx">${tab("General")}${tab("Actions")}</div>
        <button class="help" aria-label="Help">${icon(12, 12, svg`<circle cx="6" cy="6" r="5.500" fill="#3a66c0" stroke="#a9c2ee"/><path d="M4 4.500q0-2 2-2t2 1.800q0 1-2 2V7.500M6 8.500v1.500" fill="none" stroke="#fff" stroke-width="1.300"/>`)}</button>
      </nav>
      <ix-ribbon></ix-ribbon>
      <div class="body">
        <ix-explorer></ix-explorer>
        <ix-editor></ix-editor>
        <div class="side">
          <button>${icon(11, 10, svg`<rect x="1" y="0" width="10" height="9" fill="#e8dc90" stroke="#888"/><path d="M4 2h5M4 5h5" stroke="#555"/>`)}Property Grid</button>
          <button>${icon(11, 12, svg`<path d="M2 1h8v4H2zM5 6h5v5H5z" fill="#b9d3ef" stroke="#6b96c8"/>`)}Object Browser</button>
          <button>${icon(11, 11, svg`<path d="M1 0h10v11H4Q1 9 1 6z" fill="#2e5f88"/><path d="M1 0h10v3H1z" fill="#4d84ae"/>`)}Component Library</button>
        </div>
      </div>
      <div class="error"><button>${art.error}Error List</button></div>
      <ix-taskbar></ix-taskbar>
      <svg class="mouse" width="12" height="19" viewBox="0 0 12 19" aria-hidden="true"><path d="M1 1v14l3-3 2.500 6 2.500-1-2.500-6H11z" fill="#fff" stroke="#222"/></svg>
    </div>`;
  }
}
